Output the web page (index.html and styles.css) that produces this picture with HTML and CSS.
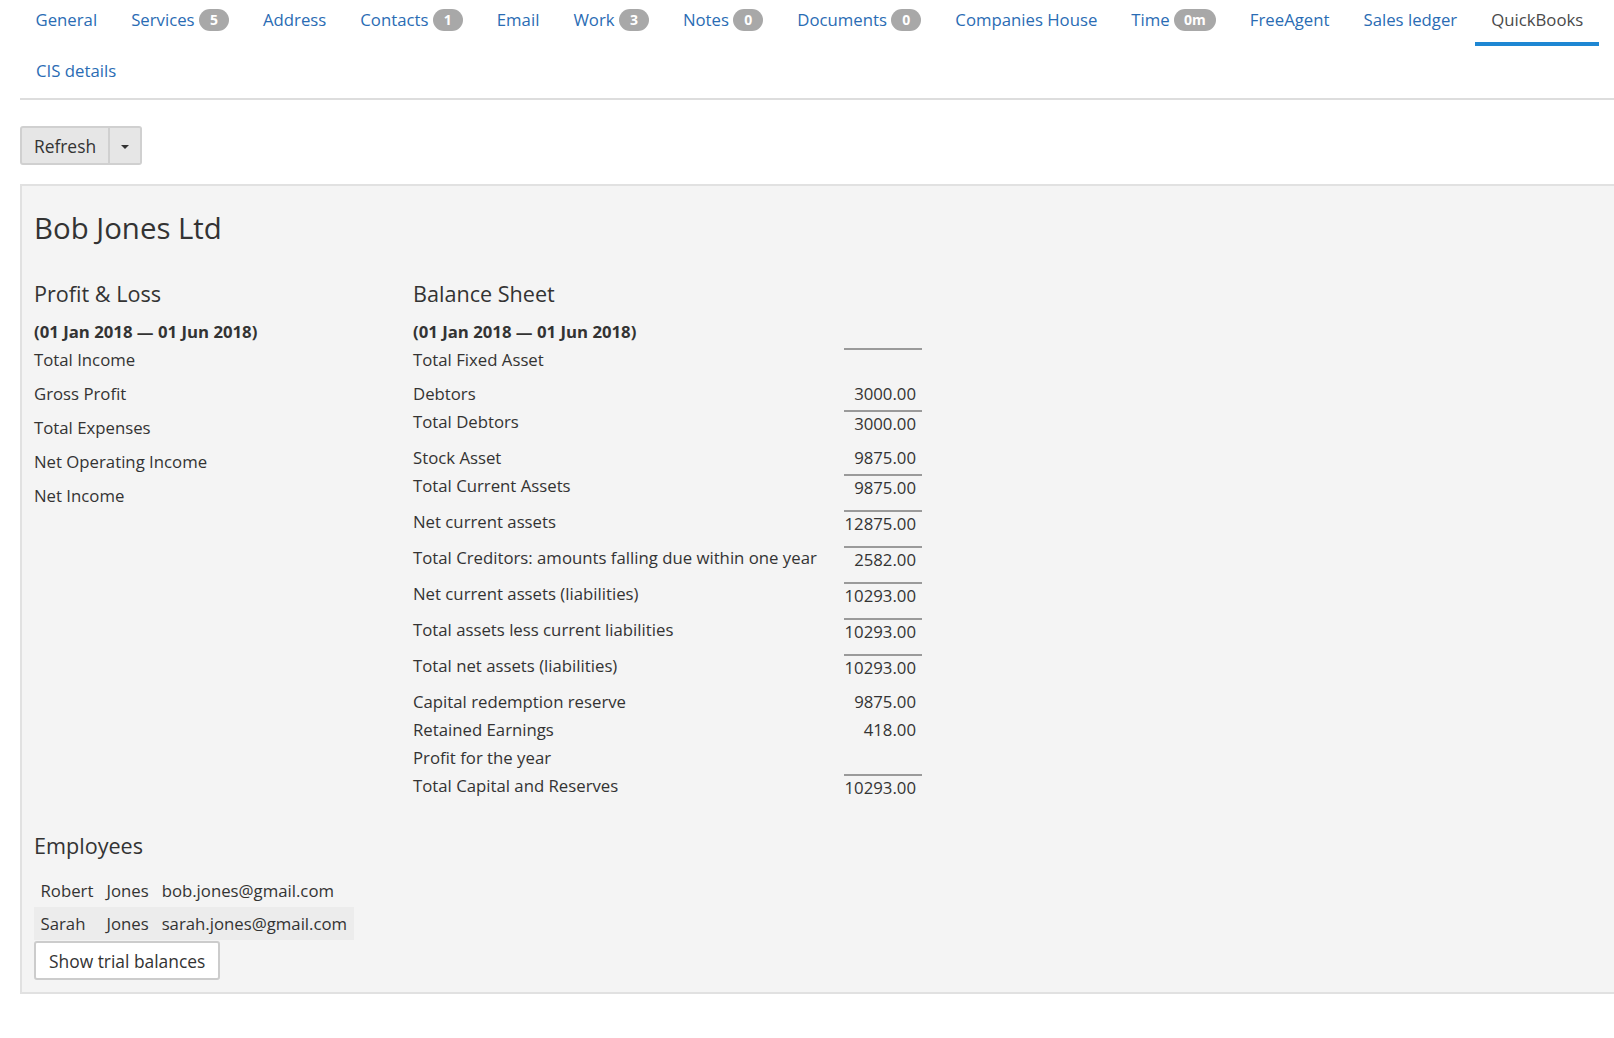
FILE: index.html
```html
<!DOCTYPE html>
<html lang="en">
<head>
<meta charset="utf-8">
<title>Bob Jones Ltd – QuickBooks</title>
<link rel="stylesheet" href="styles.css">
</head>
<body>
<div class="page">
  <nav class="tabs">
    <ul class="tab-list">
      <li class="tab"><a href="#">General</a></li>
      <li class="tab"><a href="#">Services <span class="badge">5</span></a></li>
      <li class="tab"><a href="#">Address</a></li>
      <li class="tab"><a href="#">Contacts <span class="badge">1</span></a></li>
      <li class="tab"><a href="#">Email</a></li>
      <li class="tab"><a href="#">Work <span class="badge">3</span></a></li>
      <li class="tab"><a href="#">Notes <span class="badge">0</span></a></li>
      <li class="tab"><a href="#">Documents <span class="badge">0</span></a></li>
      <li class="tab"><a href="#">Companies House</a></li>
      <li class="tab"><a href="#">Time <span class="badge">0m</span></a></li>
      <li class="tab"><a href="#">FreeAgent</a></li>
      <li class="tab"><a href="#">Sales ledger</a></li>
      <li class="tab active"><a href="#">QuickBooks</a></li>
      <li class="tab"><a href="#">CIS details</a></li>
    </ul>
  </nav>

  <div class="toolbar">
    <div class="btn-group">
      <button class="btn btn-main" type="button">Refresh</button>
      <button class="btn btn-caret" type="button"><span class="caret"></span></button>
    </div>
  </div>

  <section class="panel">
    <h1 class="company">Bob Jones Ltd</h1>

    <div class="reports">
      <div class="report report-pl">
        <h3 class="section-title">Profit &amp; Loss</h3>
        <div class="period">(01 Jan 2018 — 01 Jun 2018)</div>
        <div class="pl-row">Total Income</div>
        <div class="pl-row">Gross Profit</div>
        <div class="pl-row">Total Expenses</div>
        <div class="pl-row">Net Operating Income</div>
        <div class="pl-row">Net Income</div>
      </div>

      <div class="report report-bs">
        <h3 class="section-title">Balance Sheet</h3>
        <div class="period">(01 Jan 2018 — 01 Jun 2018)</div>
        <div class="bs-row total"><span class="label">Total Fixed Asset</span><span class="value"></span></div>
        <div class="bs-row"><span class="label">Debtors</span><span class="value">3000.00</span></div>
        <div class="bs-row total"><span class="label">Total Debtors</span><span class="value">3000.00</span></div>
        <div class="bs-row"><span class="label">Stock Asset</span><span class="value">9875.00</span></div>
        <div class="bs-row total"><span class="label">Total Current Assets</span><span class="value">9875.00</span></div>
        <div class="bs-row total"><span class="label">Net current assets</span><span class="value">12875.00</span></div>
        <div class="bs-row total"><span class="label">Total Creditors: amounts falling due within one year</span><span class="value">2582.00</span></div>
        <div class="bs-row total"><span class="label">Net current assets (liabilities)</span><span class="value">10293.00</span></div>
        <div class="bs-row total"><span class="label">Total assets less current liabilities</span><span class="value">10293.00</span></div>
        <div class="bs-row total"><span class="label">Total net assets (liabilities)</span><span class="value">10293.00</span></div>
        <div class="bs-row"><span class="label">Capital redemption reserve</span><span class="value">9875.00</span></div>
        <div class="bs-row"><span class="label">Retained Earnings</span><span class="value">418.00</span></div>
        <div class="bs-row"><span class="label">Profit for the year</span><span class="value"></span></div>
        <div class="bs-row total"><span class="label">Total Capital and Reserves</span><span class="value">10293.00</span></div>
      </div>
    </div>

    <h3 class="section-title employees-title">Employees</h3>
    <table class="employees">
      <tbody>
        <tr><td>Robert</td><td>Jones</td><td>bob.jones@gmail.com</td></tr>
        <tr class="alt"><td>Sarah</td><td>Jones</td><td>sarah.jones@gmail.com</td></tr>
      </tbody>
    </table>
    <button class="btn btn-light" type="button">Show trial balances</button>
  </section>
</div>
</body>
</html>
```

FILE: styles.css
```css
* {
  box-sizing: border-box;
}

html,
body {
  margin: 0;
  padding: 0;
  background: #ffffff;
}

body {
  font-family: "Open Sans", "Liberation Sans", sans-serif;
  font-size: 16.75px;
  line-height: 24px;
  color: #333333;
}

.page {
  padding-left: 20px;
}

/* ---------- tabs ---------- */
.tabs {
  border-bottom: 2px solid #dddddd;
  padding-bottom: 1px;
}

.tab-list {
  list-style: none;
  margin: 0;
  padding: 0;
  display: flex;
  flex-wrap: wrap;
  column-gap: 2px;
  row-gap: 5px;
}

.tab a {
  display: block;
  padding: 8px 16px 10px;
  line-height: 24px;
  border-bottom: 4px solid transparent;
  color: #2a6cb4;
  text-decoration: none;
  white-space: nowrap;
}

.tab:first-child a {
  padding-left: 15.5px;
}

.tab.active a {
  color: #4a4a4a;
  border-bottom-color: #1e87d3;
}

.badge {
  display: inline-block;
  min-width: 30px;
  text-align: center;
  font-size: 14px;
  font-weight: 700;
  line-height: 16px;
  padding: 3px 10px;
  border-radius: 11px;
  background: #a8a8a8;
  color: #ffffff;
  vertical-align: 1px;
}

/* ---------- toolbar ---------- */
.toolbar {
  margin-top: 26px;
}

.btn-group {
  display: inline-flex;
}

.btn {
  font-family: inherit;
  font-size: 17.4px;
  line-height: 24px;
  color: #333333;
  height: 39px;
  margin: 0;
  cursor: pointer;
}

.btn-main {
  width: 90px;
  padding: 0;
  text-align: center;
  background: #e6e6e6;
  border: 2px solid #d0d0d0;
  border-radius: 3px 0 0 3px;
}

.btn-caret {
  width: 32px;
  padding: 0;
  background: #e6e6e6;
  border: 2px solid #d0d0d0;
  border-left: 0;
  border-radius: 0 3px 3px 0;
  display: flex;
  align-items: center;
  justify-content: center;
}

.caret {
  display: block;
  width: 0;
  height: 0;
  margin-top: 3px;
  border-top: 4.5px solid #333333;
  border-left: 4.5px solid transparent;
  border-right: 4.5px solid transparent;
}

/* ---------- panel ---------- */
.panel {
  margin-top: 19px;
  background: #f4f4f4;
  border: 2px solid #e1e1e1;
  border-right: 0;
  padding: 0 0 12px 12px;
}

.company {
  margin: 25px 0 0;
  font-size: 29.4px;
  line-height: 34px;
  font-weight: 400;
  color: #333333;
}

.reports {
  display: flex;
  align-items: flex-start;
  margin-top: 36px;
}

.report {
  display: flex;
  flex-direction: column;
}

.report-pl {
  width: 379px;
}

.report-bs {
  width: 520px;
}

.section-title {
  margin: 0;
  font-size: 21.6px;
  line-height: 26px;
  font-weight: 400;
  color: #333333;
}

.period {
  margin-top: 13px;
  margin-bottom: 2px;
  font-weight: 700;
  line-height: 24px;
}

.pl-row {
  margin: 2px 0 8px;
  line-height: 24px;
}

.bs-row {
  display: flex;
  align-items: flex-start;
  line-height: 28px;
}

.bs-row .label {
  width: 431px;
  flex: none;
}

.bs-row .value {
  width: 78px;
  flex: none;
  text-align: right;
  padding-right: 6px;
}

.bs-row.total {
  margin: 2px 0 8px;
  line-height: 24px;
}

.bs-row.total .value {
  border-top: 2px solid #9a9a9a;
}

/* ---------- employees ---------- */
.employees-title {
  margin-top: 25px;
}

.employees {
  margin: 15px 0 0;
  border-collapse: collapse;
}

.employees td {
  padding: 4.5px 6.5px;
  line-height: 24px;
}

.employees tr.alt td {
  background: #ececec;
}

.btn-light {
  display: block;
  margin: 1px 0 0;
  padding: 0 13px;
  background: #ffffff;
  border: 2px solid #cccccc;
  border-radius: 3px;
}
```
